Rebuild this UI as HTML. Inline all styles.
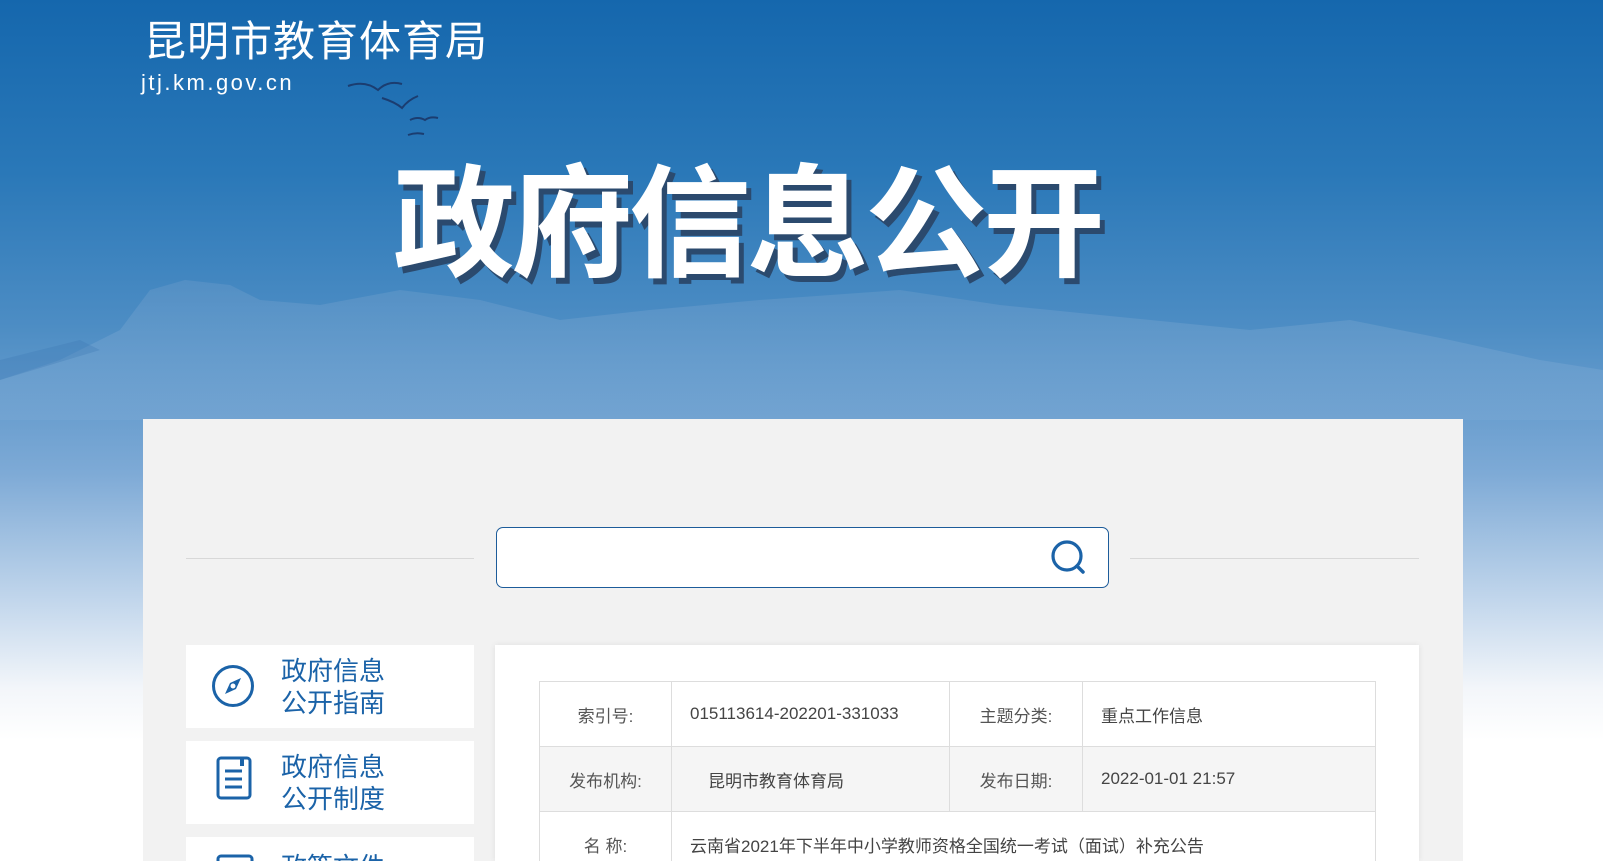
<!DOCTYPE html>
<html><head><meta charset="utf-8"><style>
*{margin:0;padding:0;box-sizing:border-box}
html,body{width:1603px;height:861px;overflow:hidden;background:#fff}
body{font-family:"Liberation Sans","Noto Sans CJK SC",sans-serif}
#w{position:relative;width:1603px;height:861px;overflow:hidden;background:linear-gradient(180deg,#1567ad 0%,#2a78b8 20%,#4d8dc4 38%,#7eaad6 55%,#c3d7ec 70%,#f3f6fa 80%,#fff 86%)}
.abs{position:absolute}
.t1{left:144px;top:16px;font-size:42px;color:#fff;line-height:52px;letter-spacing:1px}
.t2{left:141px;top:70px;font-size:22px;color:#fff;letter-spacing:2.5px}
.big{left:393px;top:150px;font-size:122px;font-weight:bold;color:#fff;letter-spacing:-4px;line-height:150px;text-shadow:5px 6px 0 #2b4a6e}
.panel{left:143px;top:419px;width:1320px;height:442px;background:#f2f2f2}
.line{height:1px;background:#d8d8d8;top:558px}
.search{left:496px;top:527px;width:613px;height:61px;border:1px solid #1d5c9a;border-radius:7px;background:#fff}
.card{left:186px;width:288px;height:83px;background:#fff;color:#1b63a8;font-size:26px;line-height:32px;overflow:hidden}
.card .tx{position:absolute;left:95px;top:10px}
.right{left:495px;top:645px;width:924px;height:216px;background:#fff;box-shadow:0 0 6px rgba(0,0,0,.08);overflow:hidden}
table{position:absolute;left:44px;top:36px;border-collapse:collapse;font-size:17px;color:#444}
td{border:1px solid #ddd;height:65px;padding-left:18px}
td.l{text-align:center;padding:0;color:#555}
tr.g td{background:#f5f5f5}
</style></head><body><div id="w">
<svg class="abs" style="left:0;top:0" width="1603" height="861">
<defs><linearGradient id="m" x1="0" y1="0" x2="0" y2="1"><stop offset="0" stop-color="#5f95c7" stop-opacity=".55"/><stop offset="1" stop-color="#a9c6e4" stop-opacity=".1"/></linearGradient></defs>
<path d="M0 380 L60 360 L120 330 L150 290 L185 280 L230 285 L260 300 L320 305 L400 290 L480 300 L560 320 L650 310 L760 300 L900 290 L1000 305 L1100 315 L1250 330 L1350 320 L1450 340 L1540 360 L1603 370 L1603 420 L0 420Z" fill="url(#m)"/>
<path d="M0 360 L80 340 L100 350 L0 380Z" fill="#3b78b4" opacity=".3"/>
<g stroke="#1b3d70" stroke-width="2" fill="none">
<path d="M348 86 Q365 80 378 90 Q388 80 402 84"/>
<path d="M382 98 Q395 102 402 108 Q408 100 418 96"/>
<path d="M410 120 Q418 116 425 120 Q430 116 438 118"/>
<path d="M408 135 Q416 132 424 134"/>
</g>
</svg>
<div class="abs t1">昆明市教育体育局</div>
<div class="abs t2">jtj.km.gov.cn</div>
<div class="abs big">政府信息公开</div>
<div class="abs panel"></div>
<div class="abs line" style="left:186px;width:288px"></div>
<div class="abs line" style="left:1130px;width:289px"></div>
<div class="abs search"><svg class="abs" style="left:550px;top:12px" width="40" height="40"><circle cx="20" cy="16" r="14" stroke="#1b63a8" stroke-width="3.2" fill="none"/><path d="M30 26 L36 32" stroke="#1b63a8" stroke-width="3.5" stroke-linecap="round"/></svg></div>
<div class="abs card" style="top:645px"><svg class="abs" style="left:26px;top:20px" width="46" height="46"><circle cx="21" cy="21" r="19.5" stroke="#1b63a8" stroke-width="3" fill="none"/><path d="M29 13 L24 24 L13 29 L18 18Z" fill="#1b63a8"/><circle cx="21" cy="21" r="2.5" fill="#fff"/></svg><div class="tx">政府信息<br>公开指南</div></div>
<div class="abs card" style="top:741px"><svg class="abs" style="left:30px;top:15px" width="40" height="46"><rect x="2" y="2" width="32" height="40" rx="3" stroke="#1b63a8" stroke-width="3" fill="none"/><path d="M9 15H26M9 23H26M9 31H26" stroke="#1b63a8" stroke-width="3"/><path d="M26 2V10" stroke="#1b63a8" stroke-width="4"/></svg><div class="tx">政府信息<br>公开制度</div></div>
<div class="abs card" style="top:837px;height:24px"><svg class="abs" style="left:30px;top:15px" width="40" height="40"><rect x="2" y="4" width="34" height="30" rx="3" stroke="#1b63a8" stroke-width="3" fill="none"/></svg><div class="tx" style="top:14px">政策文件</div></div>
<div class="abs right">
<table>
<tr><td class="l" style="width:132px">索引号:</td><td style="width:278px">015113614-202201-331033</td><td class="l" style="width:133px">主题分类:</td><td style="width:293px">重点工作信息</td></tr>
<tr class="g"><td class="l">发布机构:</td><td style="padding-left:36px">昆明市教育体育局</td><td class="l">发布日期:</td><td>2022-01-01 21:57</td></tr>
<tr><td class="l">名 称:</td><td colspan="3">云南省2021年下半年中小学教师资格全国统一考试（面试）补充公告</td></tr>
</table>
</div>
</div></body></html>
